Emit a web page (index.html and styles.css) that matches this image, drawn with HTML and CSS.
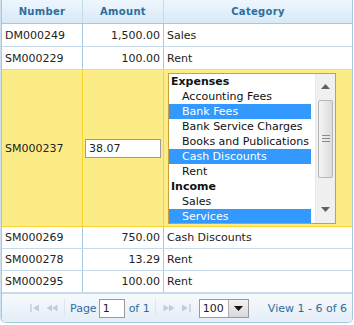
FILE: index.html
```html
<!DOCTYPE html>
<html>
<head>
<meta charset="utf-8">
<link rel="stylesheet" href="styles.css">
</head>
<body>
<div class="grid">
  <table class="tbl">
    <thead>
      <tr class="hdr">
        <th class="c1">Number</th>
        <th class="c2">Amount</th>
        <th class="c3">Category</th>
      </tr>
    </thead>
    <tbody>
      <tr class="row tall"><td>DM000249</td><td class="num">1,500.00</td><td>Sales</td></tr>
      <tr class="row tall"><td>SM000229</td><td class="num">100.00</td><td>Rent</td></tr>
      <tr class="row edit">
        <td>SM000237</td>
        <td class="ecell"><div class="inp">38.07</div></td>
        <td class="lcell">
          <div class="listbox">
            <div class="opts">
              <div class="grp">Expenses</div>
              <div class="opt">Accounting Fees</div>
              <div class="opt sel">Bank Fees</div>
              <div class="opt">Bank Service Charges</div>
              <div class="opt">Books and Publications</div>
              <div class="opt sel">Cash Discounts</div>
              <div class="opt">Rent</div>
              <div class="grp">Income</div>
              <div class="opt">Sales</div>
              <div class="opt sel">Services</div>
            </div>
            <div class="sbar">
              <div class="arr up"><svg width="9" height="5" viewBox="0 0 9 5"><path d="M0 5 L4.5 0 L9 5 Z" fill="#606060"/></svg></div>
              <div class="thumb"><svg width="8" height="9" viewBox="0 0 8 9"><path d="M0 1.5H8M0 4.5H8M0 7.5H8" stroke="#8a8a8a" stroke-width="1"/></svg></div>
              <div class="track"></div>
              <div class="arr dn"><svg width="9" height="5" viewBox="0 0 9 5"><path d="M0 0 L4.5 5 L9 0 Z" fill="#606060"/></svg></div>
            </div>
          </div>
        </td>
      </tr>
      <tr class="row"><td>SM000269</td><td class="num">750.00</td><td>Cash Discounts</td></tr>
      <tr class="row"><td>SM000278</td><td class="num">13.29</td><td>Rent</td></tr>
      <tr class="row"><td>SM000295</td><td class="num">100.00</td><td>Rent</td></tr>
    </tbody>
  </table>
  <div class="pager">
    <span class="pic first"><svg width="10" height="8" viewBox="0 0 10 8"><path d="M1 0V8" stroke="#c4ccd6" stroke-width="1.4"/><path d="M9 0.5L3 4L9 7.5Z" fill="#c4ccd6"/></svg></span>
    <span class="pic prev"><svg width="12" height="8" viewBox="0 0 12 8"><path d="M6 0.5L0.5 4L6 7.5Z M11.5 0.5L6 4L11.5 7.5Z" fill="#c4ccd6"/></svg></span>
    <span class="psep s1"></span>
    <span class="ptxt page">Page</span>
    <span class="pinp">1</span>
    <span class="ptxt of">of 1</span>
    <span class="psep s2"></span>
    <span class="pic next"><svg width="12" height="8" viewBox="0 0 12 8"><path d="M0.5 0.5L6 4L0.5 7.5Z M6 0.5L11.5 4L6 7.5Z" fill="#c4ccd6"/></svg></span>
    <span class="pic last"><svg width="10" height="8" viewBox="0 0 10 8"><path d="M9 0V8" stroke="#c4ccd6" stroke-width="1.4"/><path d="M1 0.5L7 4L1 7.5Z" fill="#c4ccd6"/></svg></span>
    <span class="psel"><span class="pselv">100</span><span class="pselb"><svg width="9" height="5" viewBox="0 0 9 5"><path d="M0 0L4.5 5L9 0Z" fill="#111"/></svg></span></span>
    <span class="pright">View 1 - 6 of 6</span>
  </div>
</div>
</body>
</html>
```

FILE: styles.css
```css
html, body {
  margin: 0;
  padding: 0;
  background: #fff;
}
body {
  font-family: "DejaVu Sans", Verdana, sans-serif;
  font-size: 11px;
  color: #222;
}
.grid {
  margin-left: 1px;
  width: 350px;
  border: 1px solid #a6c9e2;
  border-top: none;
  border-radius: 0 0 5px 5px;
  overflow: hidden;
  box-shadow: -1px 0 0 #cfe1ef;
}
.tbl {
  width: 100%;
  border-collapse: collapse;
  table-layout: fixed;
}
.c1 { width: 80px; }
.c2 { width: 80px; }
.hdr th {
  height: 23px;
  padding: 0;
  font-size: 10px;
  font-weight: bold;
  letter-spacing: 0.3px;
  color: #2e6e9e;
  background: linear-gradient(#eef6fd, #d8e9f7);
  border-right: 1px solid #c5dbec;
  border-bottom: 1px solid #a6c9e2;
  text-align: center;
}
.hdr th:last-child { border-right: none; }
.row td {
  height: 21px;
  padding: 0 3px;
  border-right: 1px solid #a6c9e2;
  border-bottom: 1px solid #c5dbec;
  white-space: nowrap;
  overflow: hidden;
}
.row.tall td { height: 22px; }
.row td:last-child { border-right: none; }
.row td.num { text-align: right; }
.edit td {
  height: 156px;
  background: #fbec88;
  border-right-color: #fad42e;
  border-bottom-color: #fad42e;
}
.edit td.ecell { padding: 0 2px 0 2px; }
.inp {
  height: 17px;
  line-height: 17px;
  border: 1px solid #9a9a9a;
  background: #fff;
  padding: 0 3px;
  font-size: 11px;
}
.edit td.lcell { padding: 0 3px 0 4px; }
.listbox {
  display: flex;
  width: 166px;
  height: 149px;
  border: 1px solid #c8a040;
  background: #fff;
  overflow: hidden;
}
.opts {
  flex: 1;
  overflow: hidden;
  padding-right: 4px;
}
.grp {
  height: 15px;
  line-height: 15px;
  font-weight: bold;
  padding-left: 2px;
  color: #111;
}
.opt {
  height: 15px;
  line-height: 15px;
  padding-left: 13px;
  color: #111;
  white-space: nowrap;
}
.opt.sel {
  background: #3399ff;
  color: #fff;
}
.sbar {
  width: 19px;
  display: flex;
  flex-direction: column;
  background: #f0f0f0;
  border-left: 1px solid #e8e8e8;
}
.arr {
  height: 26px;
  display: flex;
  align-items: center;
  justify-content: center;
}
.thumb {
  margin: 0 2px;
  height: 76px;
  border: 1px solid #b6b6b6;
  border-radius: 2px;
  background: linear-gradient(90deg, #f4f4f4, #dcdcdc);
  display: flex;
  align-items: center;
  justify-content: center;
}
.track { flex: 1; }
.pager {
  height: 28px;
  display: flex;
  align-items: center;
  background: linear-gradient(#f6fafd, #e4eef7);
  border-top: 1px solid #c5dbec;
  color: #2e6e9e;
  font-size: 11px;
  padding-left: 28px;
  padding-right: 5px;
}
.pic {
  display: flex;
  align-items: center;
}
.pic.prev { margin-left: 6px; }
.psep {
  width: 1px;
  height: 18px;
  background: #dbe6f0;
}
.psep.s1 { margin-left: 6px; }
.ptxt.page { margin-left: 5px; }
.pinp {
  box-sizing: border-box;
  width: 26px;
  height: 19px;
  line-height: 17px;
  border: 1px solid #9a9a9a;
  background: #fff;
  color: #222;
  padding-left: 3px;
  margin-left: 2px;
}
.ptxt.of { margin-left: 4px; }
.psep.s2 { margin-left: 5px; }
.pic.next { margin-left: 7px; }
.pic.last { margin-left: 6px; }
.psel {
  display: flex;
  box-sizing: border-box;
  margin-left: 8px;
  border: 1px solid #9a9a9a;
  height: 19px;
  width: 50px;
  background: #fff;
}
.pselv {
  flex: 1;
  padding-left: 3px;
  line-height: 17px;
  color: #222;
}
.pselb {
  width: 19px;
  display: flex;
  align-items: center;
  justify-content: center;
  background: linear-gradient(#f2f2f2, #d8d8d8);
  border-left: 1px solid #b0b0b0;
}
.pright {
  margin-left: auto;
}
```
